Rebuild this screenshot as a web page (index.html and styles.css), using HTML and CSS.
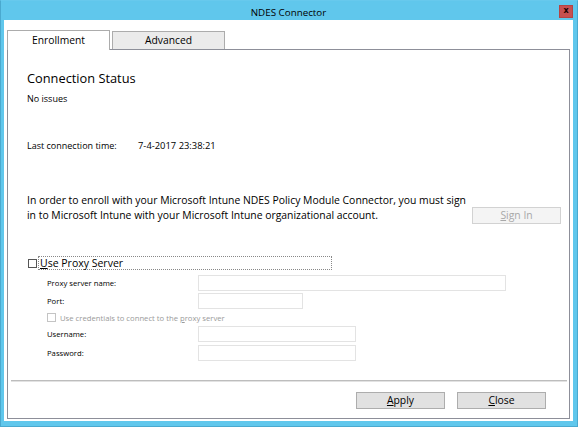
FILE: index.html
```html
<!DOCTYPE html>
<html>
<head>
<meta charset="utf-8">
<link rel="stylesheet" href="styles.css">
</head>
<body>
<div class="window">
  <div class="titlebar">
    <span class="tb-side"></span>
    <span class="title">NDES Connector</span>
    <span class="tb-side tb-right"><span class="close">x</span></span>
  </div>
  <div class="client">
    <div class="tabs">
      <div class="tab active">Enrollment</div>
      <div class="tab">Advanced</div>
    </div>
    <div class="panel">
      <div class="content">
        <div class="heading">Connection Status</div>
        <div class="status">No issues</div>
        <div class="lastconn"><span class="lc-label">Last connection time:</span><span class="lc-time">7-4-2017 23:38:21</span></div>
        <div class="signin-row">
          <p class="info">In order to enroll with your Microsoft Intune NDES Policy Module Connector, you must sign in to Microsoft Intune with your Microsoft Intune organizational account.</p>
          <div class="btn disabled signin"><span class="ul">S</span>ign In</div>
        </div>
        <div class="proxy-row">
          <span class="cb"></span>
          <span class="focus"><span class="ul">U</span>se Proxy Server</span>
        </div>
        <div class="proxy">
          <div class="field"><span class="lbl">Proxy server name:</span><span class="input w-long"></span></div>
          <div class="field f2"><span class="lbl">Port:</span><span class="input w-port"></span></div>
          <div class="cred"><span class="cb cb-dis"></span><span class="cred-text">Use credentials to connect to the <span class="ul">p</span>roxy server</span></div>
          <div class="field"><span class="lbl">Username:</span><span class="input w-mid"></span></div>
          <div class="field f4"><span class="lbl">Password:</span><span class="input w-mid"></span></div>
        </div>
      </div>
      <div class="footer">
        <div class="sep"></div>
        <div class="buttons">
          <div class="btn"><span class="ul">A</span>pply</div>
          <div class="btn"><span class="ul">C</span>lose</div>
        </div>
      </div>
    </div>
  </div>
</div>
</body>
</html>
```
FILE: styles.css
```css
html, body { margin: 0; padding: 0; }
body {
  font-family: "Open Sans", "Noto Sans", sans-serif;
  color: #000;
  width: 578px;
  height: 427px;
  overflow: hidden;
}
.window {
  width: 578px;
  height: 427px;
  box-sizing: border-box;
  background: #60c7ec;
  border: 1px solid #4aa9cf;
  border-top-color: #67c9ed;
  display: flex;
  flex-direction: column;
  padding: 0 4px 5px 3px;
}
.titlebar {
  height: 19px;
  display: grid;
  grid-template-columns: 1fr auto 1fr;
  align-items: center;
}
.title {
  font-size: 9.8px;
  line-height: 19px;
  padding-top: 2px;
}
.tb-right { display: flex; justify-content: flex-end; align-items: flex-start; height: 19px; }
.close {
  width: 14px;
  height: 13px;
  margin-top: 3px;
  box-sizing: border-box;
  background: #c75050;
  border: 1px solid #b54444;
  font-family: "DejaVu Sans", sans-serif;
  font-size: 8px;
  font-weight: bold;
  line-height: 10px;
  text-align: center;
  color: #1a0000;
}
.client {
  flex: 1;
  background: #fff;
  display: flex;
  flex-direction: column;
  padding: 10px 3px 2px 3px;
}
.tabs {
  display: flex;
  align-items: flex-end;
  gap: 2px;
  font-size: 10.3px;
}
.tab {
  box-sizing: border-box;
  width: 113px;
  height: 18px;
  border: 1px solid #acacac;
  border-bottom: none;
  background: #ebebeb;
  text-align: center;
  line-height: 17px;
}
.tab.active {
  width: 103px;
  height: 20px;
  background: #fff;
  margin-bottom: -1px;
  position: relative;
  z-index: 1;
  line-height: 19px;
}
.panel {
  flex: 1;
  border: 1px solid #8d8f99;
  display: flex;
  flex-direction: column;
}
.content {
  padding-left: 19px;
  font-size: 10.4px;
}
.heading {
  font-size: 12.8px;
  line-height: 20px;
  margin-top: 18px;
}
.status {
  line-height: 16px;
  margin-top: 3px;
  font-size: 9px;
}
.lastconn {
  line-height: 16px;
  margin-top: 31px;
  font-size: 9px;
  display: flex;
}
.lc-label { width: 111px; }
.lc-time { font-size: 9.4px; }
.signin-row {
  display: flex;
  align-items: flex-end;
  justify-content: space-between;
  margin-top: 39px;
  padding-right: 8px;
}
.info {
  margin: 0;
  width: 446px;
  line-height: 15px;
}
.btn {
  box-sizing: border-box;
  width: 89px;
  height: 17px;
  background: #e1e1e1;
  border: 1px solid #adadad;
  text-align: center;
  line-height: 15px;
  font-size: 10.4px;
}
.btn.disabled {
  background: #f4f4f4;
  border-color: #d2d2d2;
  color: #a8a8a8;
}
.signin { margin-bottom: -1px; }
.ul { text-decoration: underline; text-underline-offset: 1px; }
.proxy-row {
  display: flex;
  align-items: center;
  margin-top: 33px;
  margin-left: 1px;
  height: 14px;
}
.cb {
  box-sizing: border-box;
  width: 9px;
  height: 9px;
  border: 1px solid #555;
  background: #fff;
  margin-right: 1px;
}
.focus {
  box-sizing: border-box;
  width: 294px;
  height: 14px;
  border: 1px dotted #888;
  font-size: 10.5px;
  line-height: 12px;
  padding-left: 1px;
}
.proxy {
  padding-left: 20px;
  font-size: 7.7px;
  margin-top: 5px;
}
.field {
  display: flex;
  align-items: center;
  height: 16px;
}
.lbl { width: 151px; }
.input {
  box-sizing: border-box;
  height: 16px;
  border: 1px solid #e3e3e3;
  background: #fff;
}
.w-long { width: 308px; }
.w-port { width: 105px; }
.w-mid { width: 158px; }
.f2 { margin-top: 2px; }
.cred {
  display: flex;
  align-items: center;
  height: 17px;
  color: #9a9a9a;
}
.cb-dis {
  width: 9px;
  height: 9px;
  border-color: #c4c4c4;
  margin-right: 4px;
}
.f4 { margin-top: 3px; }
.footer {
  margin-top: auto;
  padding-bottom: 9px;
}
.sep {
  margin: 0 2px 0 3px;
  border-top: 1px solid #bdbdbd;
  border-bottom: 1px solid #e2e2e2;
}
.buttons {
  display: flex;
  justify-content: flex-end;
  gap: 12px;
  margin-top: 10px;
  padding-right: 23px;
}
```
